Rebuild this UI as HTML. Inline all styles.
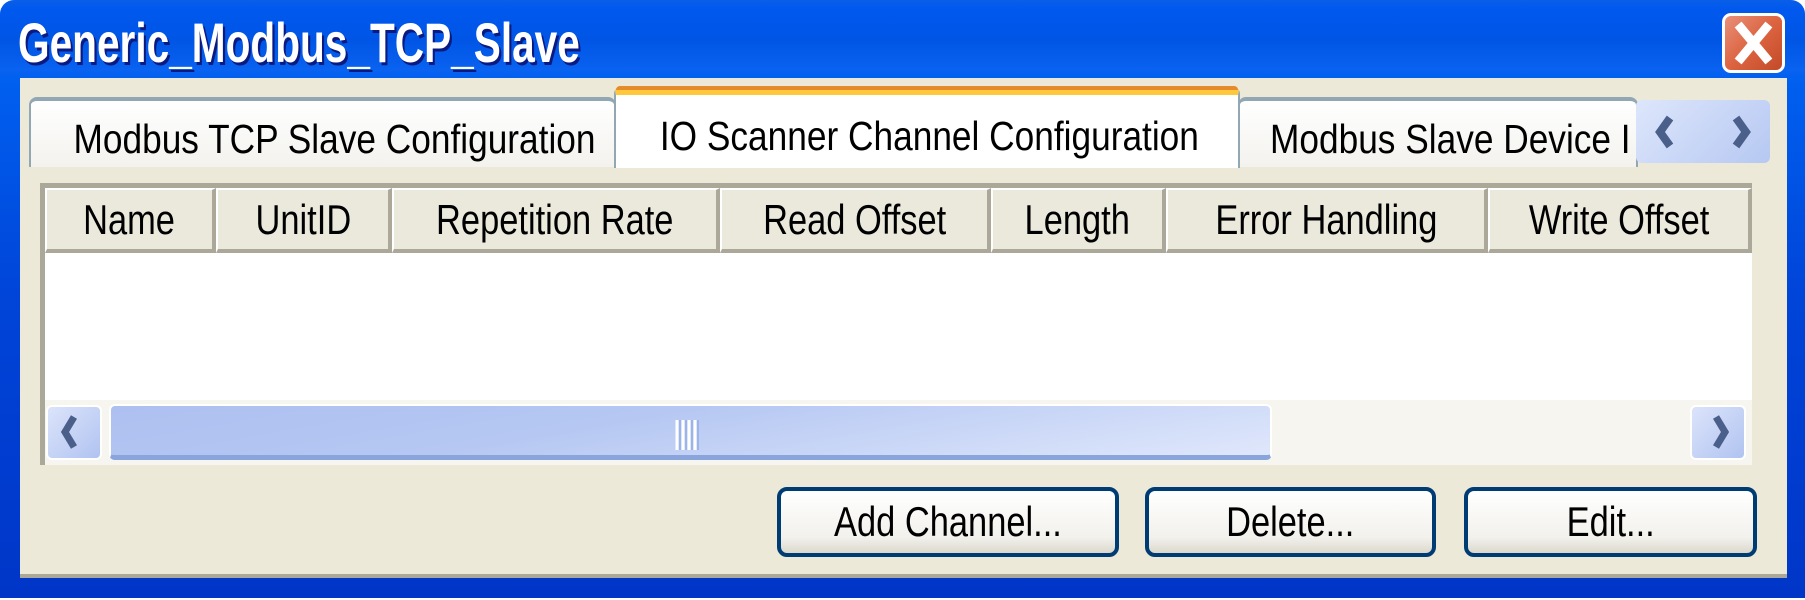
<!DOCTYPE html>
<html><head><meta charset="utf-8"><style>
*{box-sizing:border-box;margin:0;padding:0}
body{width:1805px;height:600px;overflow:hidden;background:#fff;font-family:"Liberation Sans",Arial,sans-serif;position:relative}
.abs{position:absolute}
.frame{left:0;top:0;width:1805px;height:598px;border-radius:14px 14px 0 0;background:linear-gradient(#0a5fe8 0,#0058ee 10px,#0055e5 40px,#0a62f0 70px,#0060f0 78px,#0044d8 300px,#0036c8 598px);}
.t{display:inline-block;white-space:nowrap;transform:scaleX(.82);transform-origin:center}
.tt{display:inline-block;white-space:nowrap;transform:scaleX(.86);transform-origin:center}
.title{left:18px;top:10px;font-size:56px;font-weight:bold;color:#fff;text-shadow:3px 3px 0 #0a1a80;transform:scaleX(.725);transform-origin:left;white-space:nowrap}
.close{left:1722px;top:13px;width:63px;height:60px;border:3px solid #fff;border-radius:9px;background:linear-gradient(135deg,#e8907a,#dc6440 50%,#c24a28)}
.inner{left:20px;top:78px;width:1767px;height:500px;background:#ece9d8;border-bottom:4px solid #aca899}
.tab{top:97px;height:70px;border-top:4px solid #91a7b4;border-left:2px solid #91a7b4;border-right:2px solid #91a7b4;border-radius:8px 8px 0 0;background:linear-gradient(#fff,#f3f2ee);font-size:41px;color:#000;text-align:center;line-height:76px;overflow:hidden;white-space:nowrap}
.act{top:86px;height:82px;border-top:9px solid #ffc83c;background:#fff;border-left:2px solid #91a7b4;border-right:2px solid #91a7b4;border-radius:8px 8px 0 0;line-height:82px}
.arrows{left:1636px;top:100px;width:134px;height:63px;border-radius:6px;background:linear-gradient(135deg,#dde6fb,#b6c8f2)}
.grid{left:40px;top:183px;width:1712px;height:282px;border-top:5px solid #aca899;border-left:5px solid #aca899;background:#fff}
.hc{top:188px;height:65px;background:#ebe9dc;border-top:2px solid #fff;border-left:2px solid #fff;border-right:4px solid #aca899;border-bottom:4px solid #aca899;font-size:42px;text-align:center;line-height:60px}
.track{left:45px;top:400px;width:1707px;height:65px;background:#f6f5ef}
.thumb{left:109px;top:404px;width:1163px;height:56px;border-radius:6px;border:2px solid #fff;border-bottom:5px solid #8aa4dc;background:linear-gradient(170deg,#adc0f0,#b5c7f2 40%,#dfe7fb)}
.sb{top:405px;width:56px;height:55px;border-radius:6px;border:2px solid #fff;background:linear-gradient(135deg,#dce4fb,#b0c3f0)}
.btn{top:487px;height:70px;border:4px solid #003c74;border-radius:10px;background:linear-gradient(#fff,#f2f1ec 75%,#dcd8cc);font-size:42px;text-align:center;line-height:62px}
</style></head><body>
<div class="abs frame"></div>
<div class="abs title">Generic_Modbus_TCP_Slave</div>
<div class="abs close"><svg width="57" height="54" viewBox="0 0 57 54"><path d="M16 12 L41 42 M41 12 L16 42" stroke="#fff" stroke-width="9" stroke-linecap="square"/></svg></div>
<div class="abs inner"></div>
<div class="abs tab" style="left:29px;width:587px"><span class="tt">Modbus TCP Slave Configuration</span></div>
<div class="abs tab" style="left:1238px;width:400px;text-align:left;padding-left:30px"><span class="tt" style="transform-origin:left">Modbus Slave Device I</span></div>
<div class="abs tab act" style="left:614px;width:626px"><span class="tt">IO Scanner Channel Configuration</span></div>
<div class="abs" style="left:616px;top:86px;width:622px;height:4px;background:#e68b2c;border-radius:8px 8px 0 0"></div>
<div class="abs arrows"><svg width="134" height="63"><path d="M34 18 L24 32 L34 46" stroke="#4a5f8a" stroke-width="8" fill="none"/><path d="M100 18 L110 32 L100 46" stroke="#4a5f8a" stroke-width="8" fill="none"/></svg></div>
<div class="abs grid"></div>
<div class="abs hc" style="left:45px;width:171px"><span class="t">Name</span></div>
<div class="abs hc" style="left:216px;width:176px"><span class="t">UnitID</span></div>
<div class="abs hc" style="left:392px;width:328px"><span class="t">Repetition Rate</span></div>
<div class="abs hc" style="left:720px;width:271px"><span class="t">Read Offset</span></div>
<div class="abs hc" style="left:991px;width:175px"><span class="t">Length</span></div>
<div class="abs hc" style="left:1166px;width:322px"><span class="t">Error Handling</span></div>
<div class="abs hc" style="left:1488px;width:264px"><span class="t">Write Offset</span></div>
<div class="abs track"></div>
<div class="abs thumb"><svg class="abs" style="left:563px;top:10px" width="36" height="36"><path d="M3 4V34M9 4V34M15 4V34M21 4V34" stroke="#fff" stroke-width="3"/><path d="M6 4V34M12 4V34M18 4V34M24 4V34" stroke="#9db4ea" stroke-width="2"/></svg></div>
<div class="abs sb" style="left:46px"><svg width="52" height="51"><path d="M26 10 L17 25 L26 40" stroke="#4a5f8a" stroke-width="7" fill="none"/></svg></div>
<div class="abs sb" style="left:1690px"><svg width="52" height="51"><path d="M24 10 L33 25 L24 40" stroke="#4a5f8a" stroke-width="7" fill="none"/></svg></div>
<div class="abs btn" style="left:777px;width:342px"><span class="t">Add Channel...</span></div>
<div class="abs btn" style="left:1145px;width:291px"><span class="t">Delete...</span></div>
<div class="abs btn" style="left:1464px;width:293px"><span class="t">Edit...</span></div>
</body></html>
